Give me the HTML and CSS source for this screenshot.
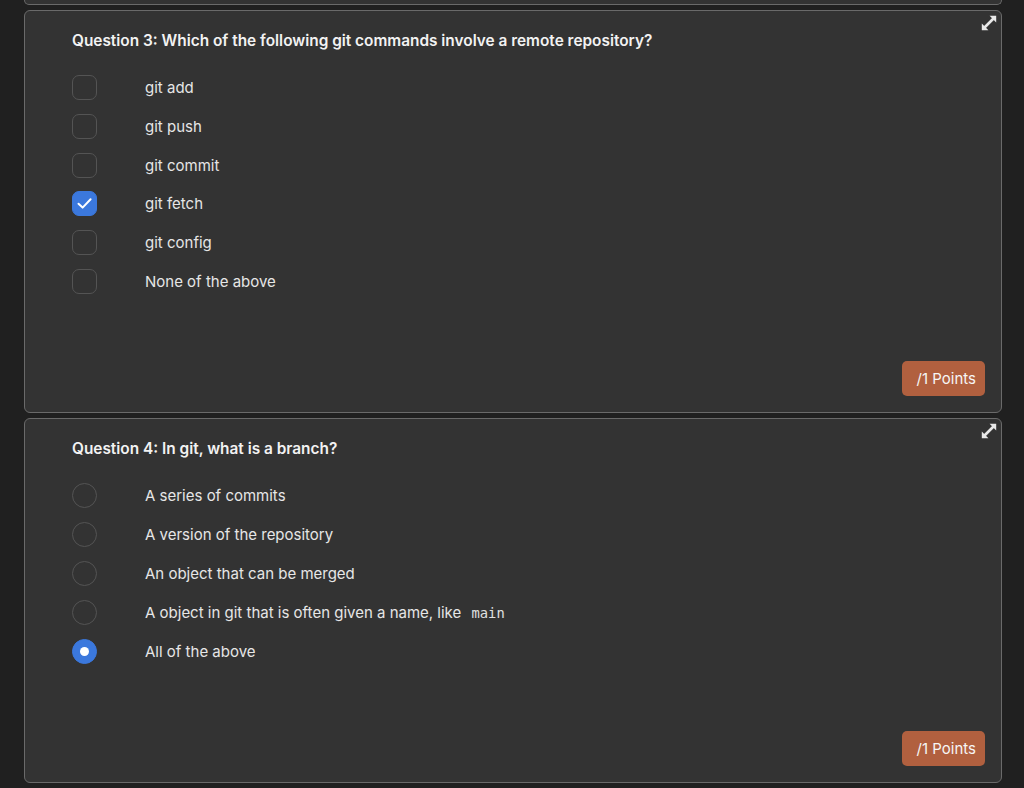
FILE: index.html
```html
<!DOCTYPE html>
<html lang="en">
<head>
    <meta charset="UTF-8">
    <meta name="viewport" content="width=device-width, initial-scale=1.0">
    <title>Quiz</title>
    <link rel="stylesheet" href="styles.css">
</head>
<body>
    <div class="quiz">
        <div class="card card-tail"></div>

        <div class="card">
            <svg class="expand" viewBox="0 0 16 16" width="16" height="16">
                <path d="M8.6 0.8H15.2V7.4Z M0.8 8.6V15.2H7.4Z" fill="#e8e8e8"/>
                <path d="M12.5 3.5L3.5 12.5" stroke="#e8e8e8" stroke-width="2.6"/>
            </svg>
            <div class="question-title">Question 3: Which of the following git commands involve a remote repository?</div>
            <div class="options checks">
                <label class="option"><span class="box"></span><span class="label">git add</span></label>
                <label class="option"><span class="box"></span><span class="label">git push</span></label>
                <label class="option"><span class="box"></span><span class="label">git commit</span></label>
                <label class="option"><span class="box checked">
                    <svg viewBox="0 0 25 25" width="25" height="25"><path d="M6.5 12.8L10.6 16.6L18.6 8.2" fill="none" stroke="#fff" stroke-width="2" stroke-linecap="round" stroke-linejoin="round"/></svg>
                </span><span class="label">git fetch</span></label>
                <label class="option"><span class="box"></span><span class="label">git config</span></label>
                <label class="option"><span class="box"></span><span class="label">None of the above</span></label>
            </div>
            <div class="card-footer">
                <span class="points">/1 Points</span>
            </div>
        </div>

        <div class="card">
            <svg class="expand" viewBox="0 0 16 16" width="16" height="16">
                <path d="M8.6 0.8H15.2V7.4Z M0.8 8.6V15.2H7.4Z" fill="#e8e8e8"/>
                <path d="M12.5 3.5L3.5 12.5" stroke="#e8e8e8" stroke-width="2.6"/>
            </svg>
            <div class="question-title">Question 4: In git, what is a branch?</div>
            <div class="options radios">
                <label class="option"><span class="radio"></span><span class="label">A series of commits</span></label>
                <label class="option"><span class="radio"></span><span class="label">A version of the repository</span></label>
                <label class="option"><span class="radio"></span><span class="label">An object that can be merged</span></label>
                <label class="option"><span class="radio"></span><span class="label">A object in git that is often given a name, like <code>main</code></span></label>
                <label class="option"><span class="radio checked"></span><span class="label">All of the above</span></label>
            </div>
            <div class="card-footer">
                <span class="points">/1 Points</span>
            </div>
        </div>
    </div>
</body>
</html>
```

FILE: styles.css
```css
body {
    margin: 0;
    background: #202020;
    font-family: Inter, "Noto Sans", sans-serif;
    color: #e8e8e8;
}
.quiz {
    display: flex;
    flex-direction: column;
    gap: 5px;
    padding: 0 22px 0 24px;
}
.card {
    position: relative;
    background: #333333;
    border: 1px solid #6a6a6a;
    border-radius: 6px;
    padding: 20px 16px 16px 47px;
}
.card-tail {
    height: 4px;
    padding: 0;
    border-top: 0;
    border-radius: 0 0 6px 6px;
}
.expand {
    position: absolute;
    top: 4px;
    right: 4px;
}
.question-title {
    font-size: 15.4px;
    line-height: 20px;
    font-weight: 600;
    color: #f2f2f2;
}
.options {
    display: flex;
    flex-direction: column;
    margin-top: 24px;
    margin-bottom: 67px;
}
.checks {
    gap: 13.8px;
}
.radios {
    gap: 14px;
}
.option {
    display: flex;
    align-items: center;
    height: 25px;
}
.box, .radio {
    width: 25px;
    height: 25px;
    box-sizing: border-box;
    border: 1px solid #545454;
    flex-shrink: 0;
}
.box {
    border-radius: 7px;
}
.box svg {
    display: block;
    margin: -1px;
}
.radio {
    border-radius: 50%;
}
.box.checked, .radio.checked {
    background: #3b78dd;
    border-color: #3b78dd;
}
.radio.checked {
    display: flex;
    align-items: center;
    justify-content: center;
}
.radio.checked::after {
    content: "";
    width: 9px;
    height: 9px;
    border-radius: 50%;
    background: #fff;
}
.label {
    margin-left: 48px;
    font-size: 15px;
    color: #e6e6e6;
}
code {
    font-family: "DejaVu Sans Mono", monospace;
    font-size: 13.8px;
    padding: 0 4px 0 6px;
    color: #e0e0e0;
}
.card-footer {
    display: flex;
    justify-content: flex-end;
}
.points {
    background: #b1603f;
    color: #f6f6f6;
    font-size: 15px;
    line-height: 35px;
    height: 35px;
    border-radius: 5px;
    padding: 0 9px 0 15px;
}
```
